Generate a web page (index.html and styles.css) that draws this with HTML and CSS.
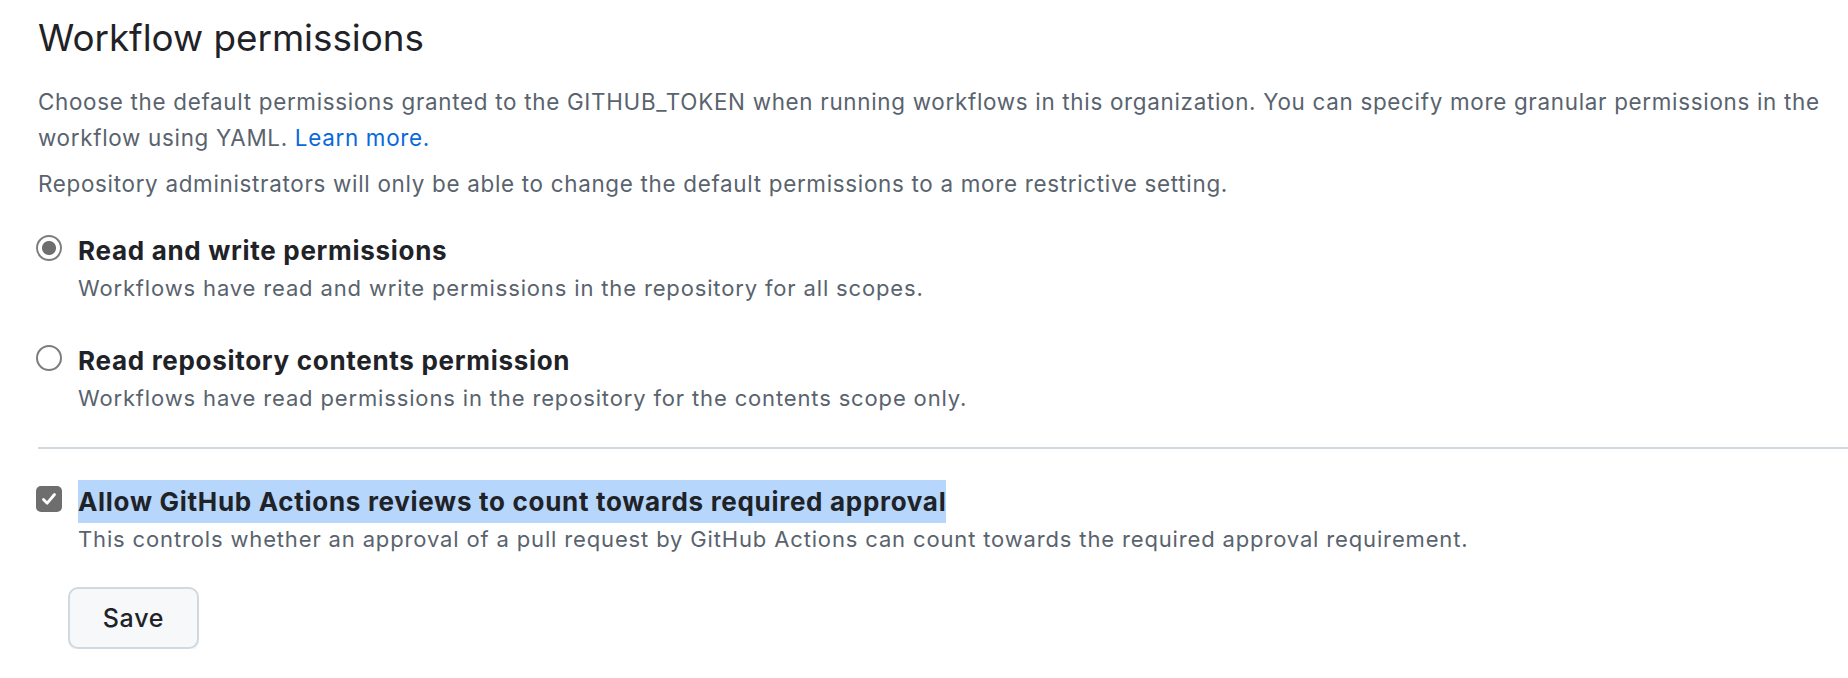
FILE: index.html
```html
<!DOCTYPE html>
<html lang="en">
<head>
    <meta charset="UTF-8">
    <meta name="viewport" content="width=device-width, initial-scale=1.0">
    <title>Workflow permissions</title>
    <link rel="stylesheet" href="styles.css">
</head>
<body>
    <div class="settings">
        <h2 class="subhead">Workflow permissions</h2>
        <p class="intro">Choose the default permissions granted to the GITHUB_TOKEN when running workflows in this organization. You can specify more granular permissions in the workflow using YAML. <a href="#">Learn more.</a></p>
        <p class="intro intro-last">Repository administrators will only be able to change the default permissions to a more restrictive setting.</p>

        <div class="option">
            <span class="radio checked"></span>
            <div class="option-body">
                <div class="option-label">Read and write permissions</div>
                <p class="note">Workflows have read and write permissions in the repository for all scopes.</p>
            </div>
        </div>

        <div class="option">
            <span class="radio"></span>
            <div class="option-body">
                <div class="option-label">Read repository contents permission</div>
                <p class="note">Workflows have read permissions in the repository for the contents scope only.</p>
            </div>
        </div>

        <hr class="divider">

        <div class="option option-last">
            <span class="checkbox">
                <svg width="18" height="18" viewBox="0 0 18 18"><path d="M3.5 9.5 L7.2 13.2 L14.5 4.5" fill="none" stroke="#fff" stroke-width="2.8" stroke-linecap="round" stroke-linejoin="round"/></svg>
            </span>
            <div class="option-body">
                <div class="option-label"><span class="selected">Allow GitHub Actions reviews to count towards required approval</span></div>
                <p class="note">This controls whether an approval of a pull request by GitHub Actions can count towards the required approval requirement.</p>
            </div>
        </div>

        <button class="btn">Save</button>
    </div>
</body>
</html>
```

FILE: styles.css
```css
body {
    margin: 0;
    background-color: #ffffff;
    font-family: Inter, "Noto Sans", "Liberation Sans", sans-serif;
    color: #1f2328;
}
.settings {
    padding: 14px 0 0 38px;
}
.subhead {
    margin: 0 0 22px 0;
    font-size: 36.8px;
    line-height: 48px;
    font-weight: 400;
    color: #1f2328;
}
.intro {
    margin: 0 0 10px 0;
    font-size: 22.4px;
    line-height: 36px;
    letter-spacing: 0.7px;
    color: #59636e;
}
.intro-last {
    margin-bottom: 31px;
}
.intro a {
    color: #0969da;
    text-decoration: none;
}
.option {
    display: flex;
    align-items: flex-start;
    gap: 16px;
    margin-left: -2px;
    margin-bottom: 37px;
}
.option-last {
    margin-bottom: 30px;
}
.option-body {
    flex: 1;
}
.option-label {
    font-size: 26px;
    line-height: 36px;
    font-weight: 700;
    letter-spacing: 0.7px;
    color: #1f2328;
}
.note {
    margin: 1px 0 0 0;
    font-size: 22px;
    line-height: 36px;
    letter-spacing: 0.85px;
    color: #59636e;
}
.radio {
    flex: none;
    width: 26px;
    height: 26px;
    margin-top: 2px;
    box-sizing: border-box;
    border: 2px solid #7d7d7d;
    border-radius: 50%;
    background-color: #fff;
}
.radio.checked {
    background: radial-gradient(circle, #6e6e6e 0 6.5px, #fff 7.5px);
}
.checkbox {
    flex: none;
    display: flex;
    align-items: center;
    justify-content: center;
    width: 26px;
    height: 26px;
    margin-top: 2px;
    border-radius: 5px;
    background-color: #6e6e6e;
}
.divider {
    margin: -6px 0 35px 0;
    border: none;
    border-top: 2px solid #d1d9e0;
}
.selected {
    background-color: #b6d6fc;
    padding: 6px 0;
}
.btn {
    margin: 0 0 0 30px;
    width: 131px;
    height: 62px;
    padding: 0;
    font-family: inherit;
    font-size: 25px;
    font-weight: 500;
    letter-spacing: 0.8px;
    color: #1f2328;
    background-color: #f6f8fa;
    border: 2px solid #d1d9e0;
    border-radius: 10px;
    box-shadow: 0 2px 0 rgba(31, 35, 40, 0.04);
    cursor: pointer;
}
```
